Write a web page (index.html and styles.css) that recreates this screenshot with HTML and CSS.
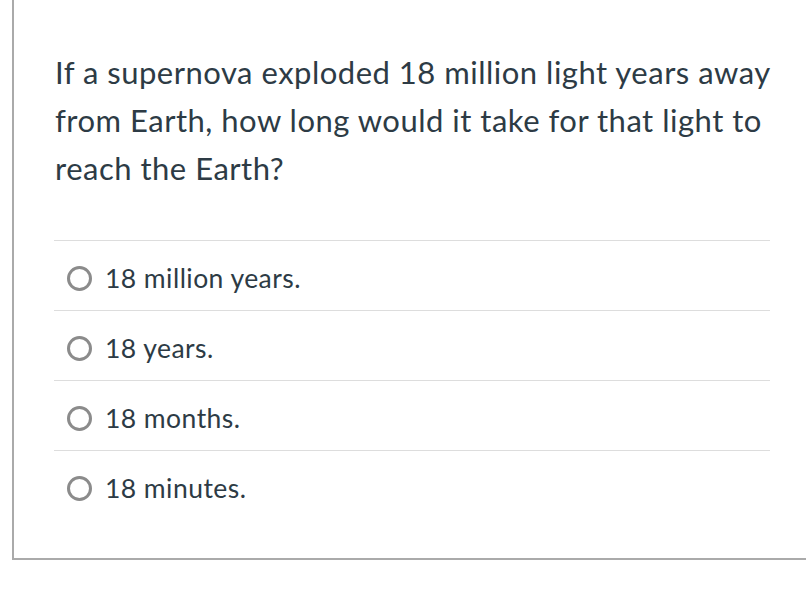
FILE: index.html
```html
<!DOCTYPE html>
<html>
<head>
<meta charset="utf-8">
<link rel="stylesheet" href="styles.css">
</head>
<body>
<div class="question">
  <div class="question-text">If a supernova exploded 18 million light years away from Earth, how long would it take for that light to reach the Earth?</div>
  <div class="answers">
    <label class="answer"><span class="radio"></span><span class="answer-text">18 million years.</span></label>
    <label class="answer"><span class="radio"></span><span class="answer-text">18 years.</span></label>
    <label class="answer"><span class="radio"></span><span class="answer-text">18 months.</span></label>
    <label class="answer last"><span class="radio"></span><span class="answer-text">18 minutes.</span></label>
  </div>
</div>
</body>
</html>
```
FILE: styles.css
```css
html, body {
  margin: 0;
  padding: 0;
  background: #fff;
}
body {
  font-family: Lato, "Noto Sans", sans-serif;
  color: #2d3b45;
}
.question {
  margin-left: 12px;
  height: 560px;
  box-sizing: border-box;
  border-left: 2px solid #aaaaaa;
  border-bottom: 2px solid #aaaaaa;
  padding: 48px 36px 0 40px;
}
.question-text {
  font-size: 31px;
  letter-spacing: 0.5px;
  line-height: 48px;
  padding-left: 1px;
}
.answers {
  margin-top: 48px;
}
.answer {
  display: flex;
  align-items: center;
  height: 70px;
  box-sizing: border-box;
  border-top: 1px solid #dddddd;
  padding-top: 5px;
  padding-left: 13px;
}
.radio {
  width: 19px;
  height: 19px;
  border: 3px solid #8b8b8b;
  border-radius: 50%;
  flex: none;
}
.answer-text {
  font-size: 26.5px;
  letter-spacing: 0.45px;
  margin-left: 13px;
}
```
